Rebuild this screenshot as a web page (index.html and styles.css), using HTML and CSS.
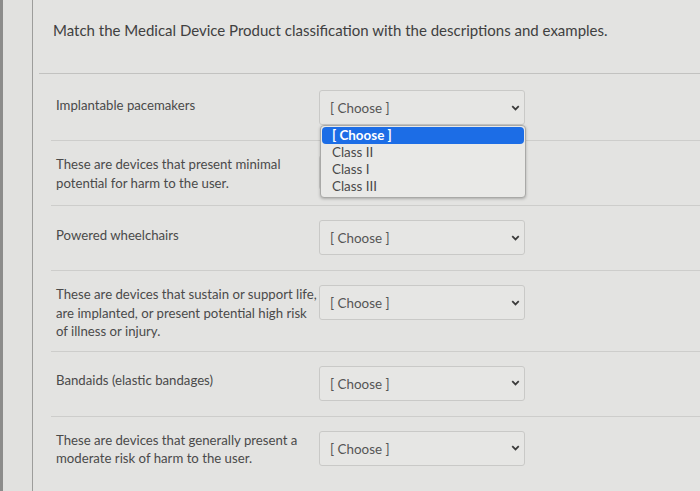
FILE: index.html
```html
<!DOCTYPE html>
<html>
<head>
<meta charset="utf-8">
<link rel="stylesheet" href="styles.css">
</head>
<body>
<div class="page">
  <div class="edge"></div>
  <div class="gutter"></div>
  <div class="content">
    <div class="title-bar">Match the Medical Device Product classification with the descriptions and examples.</div>
    <div class="rows">
      <div class="row">
        <div class="label">Implantable pacemakers</div>
        <div class="select open">
          <span>[ Choose ]</span>
          <svg class="chev" viewBox="0 0 10 7" width="9" height="6"><path d="M1.2 1.3 L5 5.2 L8.8 1.3" fill="none" stroke="#3a3a3a" stroke-width="2"/></svg>
          <div class="menu">
            <div class="opt active">[ Choose ]</div>
            <div class="opt">Class II</div>
            <div class="opt">Class I</div>
            <div class="opt">Class III</div>
          </div>
        </div>
      </div>
      <div class="row">
        <div class="label">These are devices that present minimal potential for harm to the user.</div>
        <div class="select">
          <span>[ Choose ]</span>
          <svg class="chev" viewBox="0 0 10 7" width="9" height="6"><path d="M1.2 1.3 L5 5.2 L8.8 1.3" fill="none" stroke="#3a3a3a" stroke-width="2"/></svg>
        </div>
      </div>
      <div class="row">
        <div class="label">Powered wheelchairs</div>
        <div class="select">
          <span>[ Choose ]</span>
          <svg class="chev" viewBox="0 0 10 7" width="9" height="6"><path d="M1.2 1.3 L5 5.2 L8.8 1.3" fill="none" stroke="#3a3a3a" stroke-width="2"/></svg>
        </div>
      </div>
      <div class="row">
        <div class="label">These are devices that sustain or support life, are implanted, or present potential high risk of illness or injury.</div>
        <div class="select">
          <span>[ Choose ]</span>
          <svg class="chev" viewBox="0 0 10 7" width="9" height="6"><path d="M1.2 1.3 L5 5.2 L8.8 1.3" fill="none" stroke="#3a3a3a" stroke-width="2"/></svg>
        </div>
      </div>
      <div class="row">
        <div class="label">Bandaids (elastic bandages)</div>
        <div class="select">
          <span>[ Choose ]</span>
          <svg class="chev" viewBox="0 0 10 7" width="9" height="6"><path d="M1.2 1.3 L5 5.2 L8.8 1.3" fill="none" stroke="#3a3a3a" stroke-width="2"/></svg>
        </div>
      </div>
      <div class="row">
        <div class="label">These are devices that generally present a moderate risk of harm to the user.</div>
        <div class="select">
          <span>[ Choose ]</span>
          <svg class="chev" viewBox="0 0 10 7" width="9" height="6"><path d="M1.2 1.3 L5 5.2 L8.8 1.3" fill="none" stroke="#3a3a3a" stroke-width="2"/></svg>
        </div>
      </div>
    </div>
  </div>
</div>
</body>
</html>
```
FILE: styles.css
```css
html, body {
  margin: 0;
  padding: 0;
  height: 100%;
  background: #e3e3e1;
  font-family: Lato, "Open Sans", sans-serif;
  color: #4a4a4a;
  overflow: hidden;
}

.page {
  display: flex;
  height: 491px;
}

.edge {
  width: 3px;
  background: #8c8c8b;
}

.gutter {
  width: 29px;
  border-right: 1px solid #9d9d9b;
  background: #e1e1df;
}

.content {
  flex: 1;
  padding-left: 6px;
}

.title-bar {
  box-sizing: border-box;
  height: 74px;
  padding: 19px 0 0 14px;
  font-size: 15px;
  line-height: 22px;
  color: #404040;
  border-bottom: 1px solid #c2c2c0;
}

.rows {
  margin-left: 12px;
}

.row {
  display: flex;
  align-items: flex-start;
  padding: 14px 0 10px 5px;
  border-bottom: 1px solid #cdcdcb;
}

.row:first-child {
  padding-top: 16px;
}

.row:last-child {
  border-bottom: none;
}

.label {
  box-sizing: border-box;
  flex: 0 0 262px;
  margin-right: 1px;
  min-height: 30px;
  display: flex;
  align-items: center;
  font-size: 13.2px;
  line-height: 18.5px;
  color: #4a4a4a;
}

.select {
  position: relative;
  box-sizing: border-box;
  flex: 0 0 206px;
  height: 35px;
  margin-bottom: 5px;
  border: 1px solid #c9c9c7;
  border-radius: 3px;
  background: #e6e6e4;
  display: flex;
  align-items: center;
  justify-content: space-between;
  padding: 0 4px 0 10px;
  font-size: 13.4px;
  color: #555;
}

.select span {
  padding-top: 1px;
}

.chev {
  display: block;
}

.menu {
  position: absolute;
  top: 34px;
  left: 0;
  box-sizing: border-box;
  width: 206px;
  padding: 1px 1px 2px;
  border: 1px solid #a9a9a7;
  border-radius: 4px;
  background: #e9e9e7;
  box-shadow: 0 1px 3px rgba(0,0,0,0.25);
  z-index: 2;
}

.opt {
  height: 17px;
  line-height: 17px;
  padding-left: 10px;
  font-size: 13.4px;
  color: #4a4a4a;
}

.opt.active {
  background: #1c6de6;
  color: #ffffff;
  font-weight: 700;
  border-radius: 4px;
}
```
